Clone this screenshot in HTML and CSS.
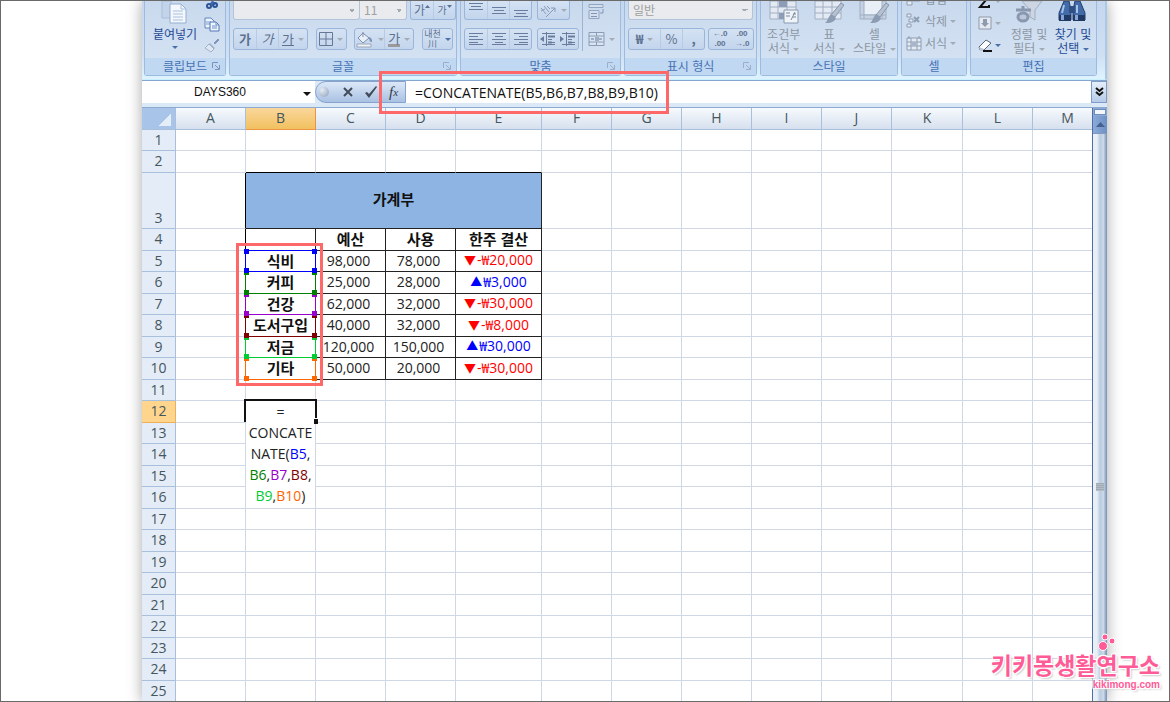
FILE: index.html
```html
<!DOCTYPE html>
<html lang="ko">
<head>
    <meta charset="UTF-8">
    <meta name="viewport" content="width=device-width, initial-scale=1.0">
    <title>가계부</title>
    <link rel="stylesheet" href="styles.css">
</head>
<body>
<div class="frame">
<main class="app">
    <div class="ribbon">
        <section class="group clipboard">
            <div class="group-body">
                <button class="big active">
                    <svg width="30" height="23" viewBox="0 0 30 23"><path d="M2 0v17h9V0z" fill="#c3d4ea" stroke="#a9bddb"/><path d="M10 3h11l5 5v14H10z" fill="#f4f8fd" stroke="#93add2"/><path d="M21 3v5h5M13 10h10M13 13h10M13 16h10M13 19h10" fill="none" stroke="#a9c0df"/></svg>
                    <span>붙여넣기</span>
                    <i class="arrow"></i>
                </button>
                <div class="stack">
                    <button aria-label="잘라내기"><svg width="16" height="9" viewBox="0 0 16 9"><path d="M8 0l3 4M9 0L6 4" stroke="#3e6cb5" stroke-width="2"/><ellipse cx="5" cy="5" rx="2" ry="2" fill="none" stroke="#2d5296" stroke-width="2"/><ellipse cx="11" cy="4" rx="2" ry="2" fill="none" stroke="#2d5296" stroke-width="2"/></svg></button>
                    <button aria-label="복사"><svg width="16" height="15" viewBox="0 0 16 15"><path d="M1 1h6l3 3v7H1z" fill="#edf4fd" stroke="#6384bd"/><path d="M2 5h5M2 7h5" stroke="#789bd0"/><path d="M6 5h6l3 3v6H6z" fill="#edf4fd" stroke="#5277b5"/><path d="M12 5v3h3M8 9h5M8 11h5" fill="none" stroke="#6f93ca"/></svg></button>
                    <button aria-label="서식 복사"><svg width="16" height="15" viewBox="0 0 16 15"><path d="M10 5l4-4 1 1-4 4z" fill="#8299bd" stroke="#8299bd"/><path d="M6 5l5 5-2 2-5-5z" fill="#a3b4cd"/><path d="M5 6l5 5-3 3-6-4z" fill="#dfe7f2" stroke="#a1b1ca"/></svg></button>
                </div>
            </div>
            <h2>클립보드<svg class="launcher" width="8" height="8" viewBox="0 0 8 8"><path d="M.5 6V.5H6M3 3l4 4M7.500 3v4.500H3" fill="none" stroke="#7994bd"/></svg></h2>
        </section>

        <section class="group font">
            <div class="group-body rows">
                <div class="row cut">
                    <div class="pair">
                        <select class="font-name" aria-label="글꼴"><option></option></select>
                        <select class="font-size" aria-label="글꼴 크기"><option>11</option></select>
                    </div>
                    <div class="box resize">
                        <button aria-label="글꼴 크게"><span>가</span><svg width="5" height="12" viewBox="0 0 5 12"><path d="M0 4l2.500-3L5 4z" fill="#5d7190"/></svg></button>
                        <button aria-label="글꼴 작게"><small>가</small><svg width="5" height="12" viewBox="0 0 5 12"><path d="M0 1l2.500 3L5 1z" fill="#5d7190"/></svg></button>
                    </div>
                </div>
                <div class="row">
                    <div class="box">
                        <button><b>가</b></button>
                        <button><em>가</em></button>
                        <button class="wide"><u>가</u><i class="arrow dim"></i></button>
                    </div>
                    <div class="box">
                        <button class="wide" aria-label="테두리"><svg width="14" height="14" viewBox="0 0 14 14"><path d="M.5 .5h13v13H.5zM7 1v12M1 7h12" fill="none" stroke="#647896"/></svg><i class="arrow dim"></i></button>
                    </div>
                    <div class="box">
                        <button class="wide" aria-label="채우기 색"><svg width="18" height="17" viewBox="0 0 18 17"><path d="M7 2l6 5-6 5-5-5z" fill="#e9eff8" stroke="#7c8fab"/><path d="M7 6V1" stroke="#7c8fab"/><path d="M13 6c3 1 3 3 3 5-2 0-3-1-3-5z" fill="#7e93b4"/><path d="M1 13h14v3H1z" fill="#eef1f5" stroke="#9aa7b8"/></svg><i class="arrow dim"></i></button>
                        <button class="wide font-color"><span>가</span><i class="arrow dim"></i></button>
                    </div>
                    <div class="box">
                        <button class="wide ruby"><span>내천<br>川</span><i class="arrow"></i></button>
                    </div>
                </div>
            </div>
            <h2>글꼴<svg class="launcher" width="8" height="8" viewBox="0 0 8 8"><path d="M.5 6V.5H6M3 3l4 4M7.500 3v4.500H3" fill="none" stroke="#9aaecb"/></svg></h2>
        </section>

        <section class="group align">
            <div class="group-body">
                <div class="rows">
                    <div class="row cut">
                        <div class="box">
                            <button aria-label="위쪽 맞춤"><svg width="16" height="16" viewBox="0 0 16 16"><path d="M1 1.500h14M3 4.500h10M1 7.500h14" stroke="#687d9e"/></svg></button>
                            <button aria-label="가운데 맞춤"><svg width="16" height="16" viewBox="0 0 16 16"><path d="M1 5.500h14M3 8.500h10M1 11.500h14" stroke="#687d9e"/></svg></button>
                            <button aria-label="아래쪽 맞춤"><svg width="16" height="16" viewBox="0 0 16 16"><path d="M1 8.500h14M3 11.500h10M1 14.500h14" stroke="#687d9e"/></svg></button>
                        </div>
                        <div class="box">
                            <button class="wide" aria-label="방향"><svg width="17" height="16" viewBox="0 0 17 16"><path d="M1 6l5 6M4 4l5 6M1 9l4-2M7 4l3 3M6 15l9-9M11 6h4v4" fill="none" stroke="#8c9bb4"/></svg><i class="arrow dim"></i></button>
                        </div>
                    </div>
                    <div class="row">
                        <div class="box">
                            <button aria-label="왼쪽 맞춤"><svg width="16" height="16" viewBox="0 0 16 16"><path d="M1 2.500h14M1 5.500h9M1 8.500h14M1 11.500h9M1 13.500h14" stroke="#687d9e"/></svg></button>
                            <button aria-label="중앙 맞춤"><svg width="16" height="16" viewBox="0 0 16 16"><path d="M1 2.500h14M4 5.500h8M1 8.500h14M4 11.500h8M1 13.500h14" stroke="#687d9e"/></svg></button>
                            <button aria-label="오른쪽 맞춤"><svg width="16" height="16" viewBox="0 0 16 16"><path d="M1 2.500h14M6 5.500h9M1 8.500h14M6 11.500h9M1 13.500h14" stroke="#687d9e"/></svg></button>
                        </div>
                        <div class="box plain">
                            <button class="slim" aria-label="내어쓰기"><svg width="16" height="16" viewBox="0 0 16 16"><path d="M2 2.500h13M8 5.500h7M8 8.500h4M8 11.500h7M2 13.500h13M6.500 1v14" stroke="#687d9e"/><path d="M8 5.500h7M8 11.500h4" stroke="#687d9e" stroke-width="2"/><path d="M4 5L0 8l4 3z" fill="#687d9e"/></svg></button>
                            <button class="slim" aria-label="들여쓰기"><svg width="16" height="16" viewBox="0 0 16 16"><path d="M2 2.500h13M8 5.500h7M8 8.500h4M8 11.500h7M2 13.500h13M6.500 1v14" stroke="#687d9e"/><path d="M8 5.500h7M8 11.500h4" stroke="#687d9e" stroke-width="2"/><path d="M0 5l4 3-4 3z" fill="#687d9e"/></svg></button>
                        </div>
                    </div>
                </div>
                <div class="rows divided">
                    <button aria-label="텍스트 줄 바꿈"><svg width="17" height="18" viewBox="0 0 17 18"><path d="M1 2.500h14v3H1zM1 8.500h10v8H1z" fill="#d3dfee" stroke="#93a4be"/><path d="M3 11.500h6M3 14.500h6M12 11h3V7" fill="none" stroke="#8194b3"/></svg></button>
                    <button class="wide" aria-label="병합하고 가운데 맞춤"><svg width="17" height="16" viewBox="0 0 17 16"><path d="M1 1.500h15v13H1zM1 5h15M1 11h15M8.500 1v4M8.500 11v4" fill="#d9e4f2" stroke="#8b9cb6"/><path d="M3 8h3M11 8h3M8 6v4M10 6v4" stroke="#667998"/></svg><i class="arrow dim"></i></button>
                </div>
            </div>
            <h2>맞춤<svg class="launcher" width="8" height="8" viewBox="0 0 8 8"><path d="M.5 6V.5H6M3 3l4 4M7.500 3v4.500H3" fill="none" stroke="#9aaecb"/></svg></h2>
        </section>

        <section class="group number">
            <div class="group-body rows">
                <div class="row cut"><select class="format" aria-label="표시 형식"><option>일반</option></select></div>
                <div class="row">
                    <div class="box">
                        <button class="wide"><b>₩</b><i class="arrow dim"></i></button>
                        <button>%</button>
                        <button><b>,</b></button>
                    </div>
                    <div class="box plain decimals">
                        <button>←.0<br>.00</button>
                        <button>.00<br>→.0</button>
                    </div>
                </div>
            </div>
            <h2>표시 형식<svg class="launcher" width="8" height="8" viewBox="0 0 8 8"><path d="M.5 6V.5H6M3 3l4 4M7.500 3v4.500H3" fill="none" stroke="#9aaecb"/></svg></h2>
        </section>

        <section class="group style">
            <div class="group-body">
                <button class="big">
                    <svg width="30" height="23" viewBox="0 0 30 23"><path d="M1 0h26v18H1z" fill="#e3eaf4" stroke="#a0aec2"/><path d="M1 6h26M1 12h26M9 0v18M18 0v18" stroke="#a0aec2"/><path d="M10 0h8v6h-8zM10 12h5v6h-5z" fill="#8d9db5"/><path d="M15 9h14v13H15z" fill="#f0f4f9" stroke="#8999b0"/><path d="M17 12h4M17 15h4M22 19l4-8M24 13h3M24 16h3" stroke="#78899f"/></svg>
                    <span>조건부<br>서식 <i class="arrow dim"></i></span>
                </button>
                <button class="big">
                    <svg width="30" height="23" viewBox="0 0 30 23"><path d="M1 0h26v18H1z" fill="#e3eaf4" stroke="#a0aec2"/><path d="M1 6h26M1 12h26M9 0v18M18 0v18" stroke="#a0aec2"/><path d="M27 2l3 2-9 12-4-2z" fill="#b5c0d0" stroke="#8796ac"/><path d="M17 13l5 4c-2 5-7 5-11 5 3-2 3-6 6-9z" fill="#8c9cb3"/></svg>
                    <span>표<br>서식 <i class="arrow dim"></i></span>
                </button>
                <button class="big">
                    <svg width="30" height="23" viewBox="0 0 30 23"><path d="M1 0h26v18H1z" fill="#c6d2e3" stroke="#a0aec2"/><path d="M5 0h18v13H5z" fill="#e9eff7"/><path d="M1 14h26M5 0v18M23 0v18" stroke="#a0aec2"/><path d="M27 2l3 2-9 12-4-2z" fill="#b5c0d0" stroke="#8796ac"/><path d="M17 13l5 4c-2 5-7 5-11 5 3-2 3-6 6-9z" fill="#8c9cb3"/></svg>
                    <span>셀<br>스타일 <i class="arrow dim"></i></span>
                </button>
            </div>
            <h2>스타일</h2>
        </section>

        <section class="group cells">
            <div class="group-body list">
                <button><svg width="16" height="16" viewBox="0 0 16 16"><path d="M1 2h5v4H1zM1 10h5v4H1zM7 7h7v3H7z" fill="#e5ebf4" stroke="#8e9db3"/></svg>삽입<i class="arrow dim"></i></button>
                <button><svg width="16" height="16" viewBox="0 0 16 16"><path d="M1 1h4v3H1zM1 11h4v3H1zM3 6h4v3H3z" fill="#e5ebf4" stroke="#8e9db3"/><path d="M8 4l5 5M13 4l-5 5" stroke="#8e9db3" stroke-width="2"/></svg>삭제<i class="arrow dim"></i></button>
                <button><svg width="16" height="16" viewBox="0 0 16 16"><path d="M1 3h14v12H1zM1 7h14M1 11h14M5 3v12M11 3v12M3 1v3M13 1v3" fill="#e5ebf4" stroke="#8e9db3"/><path d="M5 7h6v4H5z" fill="#a9b6ca"/></svg>서식<i class="arrow dim"></i></button>
            </div>
            <h2>셀</h2>
        </section>

        <section class="group edit">
            <div class="group-body">
                <div class="stack">
                    <button aria-label="합계"><svg width="16" height="16" viewBox="0 0 16 16"><path d="M12 2V1H4l5 6-6 7h9v-2" fill="none" stroke="#111" stroke-width="2"/></svg><i class="arrow dim"></i></button>
                    <button aria-label="채우기"><svg width="16" height="16" viewBox="0 0 16 16"><path d="M2 2h12v12H2z" fill="#e5eaf1" stroke="#8d9aab"/><path d="M6 4h4v4h2l-4 4-4-4h2z" fill="#8d9bb0"/></svg><i class="arrow dim"></i></button>
                    <button aria-label="지우기"><svg width="16" height="16" viewBox="0 0 16 16"><path d="M2 10l7-7 5 3-7 7H3z" fill="#fff" stroke="#56657b"/><path d="M2 10l5 2v2H3z" fill="#bbc6d7"/><path d="M6 14h9" stroke="#111" stroke-width="2"/></svg><i class="arrow"></i></button>
                </div>
                <button class="big">
                    <svg width="30" height="23" viewBox="0 0 30 23"><path d="M8 0h20l-7 9v10l-5-3V9z" fill="#ccd5e2" stroke="#a3afc0"/><path d="M2 9h15M9 5v3" stroke="#8998ae" stroke-width="3"/><ellipse cx="9" cy="16" rx="5" ry="4" fill="#bcc8d9" stroke="#8998ae" stroke-width="3"/></svg>
                    <span>정렬 및<br>필터 <i class="arrow dim"></i></span>
                </button>
                <button class="big active">
                    <svg width="30" height="23" viewBox="0 0 30 23"><path d="M6 0h5l2 9v10H1v-7zM17 0h5l5 12v7H15V9z" fill="#416ba9" stroke="#243f70"/><path d="M11 5h6v7h-6z" fill="#304f82"/><path d="M6 4l-2 8M19 4v8" stroke="#a7c3e8" stroke-width="2"/><path d="M1 14h12v6H1zM15 14h12v6H15z" fill="#203965"/><path d="M3 14h3v5H3zM17 14h3v5h-3z" fill="#86a6d4"/></svg>
                    <span>찾기 및<br>선택 <i class="arrow"></i></span>
                </button>
            </div>
            <h2>편집</h2>
        </section>
    </div>

    <div class="formula-bar">
        <input class="name-box" aria-label="이름 상자" value="DAYS360">
        <button class="name-drop" aria-label="이름 목록"><i class="arrow black"></i></button>
        <div class="formula-tools">
            <span class="knob"></span>
            <button aria-label="취소"><svg width="12" height="12" viewBox="0 0 12 12"><path d="M2 2l8 8M10 2l-8 8" stroke="#404a59" stroke-width="2"/></svg></button>
            <button aria-label="입력"><svg width="14" height="12" viewBox="0 0 14 12"><path d="M1 7l2-1 2 2 7-8 1 1-8 11z" fill="#404a59"/></svg></button>
            <button class="fx" aria-label="함수 삽입">f<sub>x</sub></button>
        </div>
        <input class="formula" aria-label="수식 입력줄" value="=CONCATENATE(B5,B6,B7,B8,B9,B10)">
        <button class="expand" aria-label="수식 입력줄 확장"><svg width="9" height="10" viewBox="0 0 9 10"><path d="M1 1l3.500 3L8 1M1 5l3.500 3L8 5" fill="none" stroke="#111" stroke-width="2"/></svg></button>
        <div class="mark mark-formula"></div>
    </div>

    <div class="workspace">
        <div class="sheet">
            <table>
                <colgroup><col class="c-head"><col><col><col><col><col class="c-e"><col><col><col><col><col><col class="c-k"><col><col></colgroup>
                <thead>
                    <tr><th class="corner"><th>A<th class="on">B<th>C<th>D<th>E<th>F<th>G<th>H<th>I<th>J<th>K<th>L<th>M</tr>
                </thead>
                <tbody>
                    <tr><th>1<td><td><td><td><td><td><td><td><td><td><td><td><td></tr>
                    <tr><th>2<td><td class="above"><td class="above"><td class="above"><td class="above"><td><td><td><td><td><td><td><td></tr>
                    <tr class="tall"><th>3<td class="before"><td colspan="4" class="cell title">가계부<td><td><td><td><td><td><td><td></tr>
                    <tr><th>4<td class="before"><td class="cell"><td class="cell name">예산<td class="cell name">사용<td class="cell name">한주 결산<td><td><td><td><td><td><td><td></tr>
                    <tr><th>5<td class="before"><td class="cell name">식비<span class="ref blue"></span><td class="cell num">98,000<td class="cell num">78,000<td class="cell down"><i>▼</i>-₩20,000<td><td><td><td><td><td><td><td></tr>
                    <tr><th>6<td class="before"><td class="cell name">커피<span class="ref green"></span><td class="cell num">25,000<td class="cell num">28,000<td class="cell up"><i>▲</i>₩3,000<td><td><td><td><td><td><td><td></tr>
                    <tr><th>7<td class="before"><td class="cell name">건강<span class="ref purple"></span><td class="cell num">62,000<td class="cell num">32,000<td class="cell down"><i>▼</i>-₩30,000<td><td><td><td><td><td><td><td></tr>
                    <tr><th>8<td class="before"><td class="cell name">도서구입<span class="ref maroon"></span><td class="cell num">40,000<td class="cell num">32,000<td class="cell down"><i>▼</i>-₩8,000<td><td><td><td><td><td><td><td></tr>
                    <tr><th>9<td class="before"><td class="cell name">저금<span class="ref lime"></span><td class="cell num">120,000<td class="cell num">150,000<td class="cell up"><i>▲</i>₩30,000<td><td><td><td><td><td><td><td></tr>
                    <tr><th>10<td class="before"><td class="cell name">기타<span class="ref orange"></span><td class="cell num">50,000<td class="cell num">20,000<td class="cell down"><i>▼</i>-₩30,000<td><td><td><td><td><td><td><td></tr>
                    <tr><th>11<td><td><td><td><td><td><td><td><td><td><td><td><td></tr>
                    <tr><th class="on">12<td><td class="editing"><div class="editor">=<br>CONCATE<br>NATE(<span class="blue">B5</span>,<br><span class="green">B6</span>,<span class="purple">B7</span>,<span class="maroon">B8</span>,<br><span class="lime">B9</span>,<span class="orange">B10</span>)</div><span class="active-cell"></span><td><td><td><td><td><td><td><td><td><td><td></tr>
                    <tr><th>13<td><td><td><td><td><td><td><td><td><td><td><td><td></tr>
                    <tr><th>14<td><td><td><td><td><td><td><td><td><td><td><td><td></tr>
                    <tr><th>15<td><td><td><td><td><td><td><td><td><td><td><td><td></tr>
                    <tr><th>16<td><td><td><td><td><td><td><td><td><td><td><td><td></tr>
                    <tr><th>17<td><td><td><td><td><td><td><td><td><td><td><td><td></tr>
                    <tr><th>18<td><td><td><td><td><td><td><td><td><td><td><td><td></tr>
                    <tr><th>19<td><td><td><td><td><td><td><td><td><td><td><td><td></tr>
                    <tr><th>20<td><td><td><td><td><td><td><td><td><td><td><td><td></tr>
                    <tr><th>21<td><td><td><td><td><td><td><td><td><td><td><td><td></tr>
                    <tr><th>22<td><td><td><td><td><td><td><td><td><td><td><td><td></tr>
                    <tr><th>23<td><td><td><td><td><td><td><td><td><td><td><td><td></tr>
                    <tr><th>24<td><td><td><td><td><td><td><td><td><td><td><td><td></tr>
                    <tr><th>25<td><td><td><td><td><td><td><td><td><td><td><td><td></tr>
                </tbody>
            </table>
            <div class="mark mark-names"></div>
        </div>
        <div class="scrollbar">
            <div class="split"></div>
            <button class="scroll-up" aria-label="위로"><svg width="9" height="5" viewBox="0 0 9 5"><path d="M0 5l4.500-5L9 5z" fill="#46618f"/></svg></button>
            <div class="thumb"><div class="grip"></div></div>
        </div>
    </div>
</main>
<div class="watermark">
    <svg width="20" height="19" viewBox="0 0 20 19"><g fill="#ff5c97" stroke="#fff"><circle cx="6" cy="13" r="4.500"/><circle cx="8" cy="4" r="3"/><circle cx="15" cy="8" r="3"/></g></svg>
    <strong>키키몽생활연구소</strong>
    <span>kikimong.com</span>
</div>
</div>
</body>
</html>
```
FILE: styles.css
```css
* { box-sizing: border-box; }
body { margin: 0; background: #fff; color: #222; font-family: "Open Sans", "Noto Sans CJK KR", sans-serif; font-size: 14px; }
button { margin: 0; padding: 0; border: 0; background: none; color: inherit; font: inherit; }
input, select { margin: 0; border-radius: 0; font: inherit; }
svg { display: block; flex: none; }

.frame { position: relative; height: 100vh; padding: 0 62px 0 141px; border: 1px solid #6a6a6a; overflow: hidden; }
.app { background: #fff; box-shadow: 0 0 14px rgba(0, 0, 0, 0.35); min-height: 100%; }

/* ribbon */
.ribbon { display: flex; align-items: flex-end; gap: 3px; height: 79px; padding: 0 2px 3px; overflow: hidden; background: linear-gradient(#c5d7ee, #cfe0f3 70%, #dff3ff); border-right: 2px solid #a9c9e8; border-bottom: 1px solid #c9f0ff; font-family: "Noto Sans CJK KR", sans-serif; font-size: 12px; color: #5d7190; }
.group { flex: none; height: 75px; border: 1px solid #9dbbe0; border-top: 0; border-radius: 0 0 3px 3px; background: linear-gradient(#c9d9ed, #d6e4f4); }
.group h2 { position: relative; margin: 0; height: 17px; line-height: 15px; background: #c0d8f1; color: #4672b4; font-size: 12px; font-weight: 400; text-align: center; }
.launcher { position: absolute; right: 5px; top: 4px; }
.group-body { display: flex; height: 57px; padding: 0 3px; }
.clipboard { width: 82px; }
.clipboard .group-body { padding: 0 3px 0 1px; }
.font { width: 228px; }
.align { width: 161px; }
.number { width: 133px; }
.style { width: 138px; }
.cells { width: 66px; }
.edit { width: 127px; }

.arrow { display: inline-block; flex: none; border: 3px solid transparent; border-top-color: #4970a8; border-bottom: 0; vertical-align: middle; }
.arrow.dim { border-top-color: #a3abb5; }
.arrow.black { border-width: 4px 4px 0; border-top-color: #111; }

.big { display: flex; flex-direction: column; align-items: center; flex: 1; line-height: 14px; color: #8c96a3; white-space: nowrap; }
.big.active { color: #1e4a94; }
.big > svg { margin-bottom: 3px; }
.clipboard .big { flex: 0 0 58px; }
.clipboard .big .arrow { margin-top: 5px; }
.stack { display: flex; flex-direction: column; justify-content: space-between; padding-bottom: 5px; }
.stack button { display: flex; align-items: center; gap: 2px; }
.edit .stack { width: 30px; justify-content: flex-end; gap: 6px; }
.edit .big { flex: 0 0 44px; }
.edit .group-body { padding: 0 1px 0 6px; }

.rows { display: flex; flex-direction: column; gap: 8px; }
.row { display: flex; gap: 3px; height: 22px; }
.row.cut { height: 19px; }
.row.cut .box, .row.cut select { border-top: 0; border-radius: 0 0 3px 3px; }
.box { display: flex; border: 1px solid #9ab5da; border-radius: 3px; background: linear-gradient(#d4e2f3, #c3d5ed); }
.box button { display: flex; align-items: center; justify-content: center; width: 22px; font-size: 13px; line-height: 14px; }
.box button + button { border-left: 1px solid #b7cbe5; }
.plain button + button { border-left: 0; }
.box button.wide { width: 31px; gap: 4px; }
.box button.slim { width: 20px; }
.resize button { font-size: 12px; }
.resize small { font-size: 10px; }
.font .box button.wide { width: 29px; }
.font .font-color span { border-bottom: 3px solid #9a9a9a; line-height: 13px; }
.box .ruby span { font-size: 9px; line-height: 10px; }
.font .row { justify-content: space-between; width: 220px; }
.pair { display: flex; }
select { appearance: none; padding: 0 4px; border: 1px solid #b3c4da; color: #a0a0a0; background: linear-gradient(45deg, transparent 50%, #a3abb5 50%) right 7px top 8px / 3px 3px no-repeat, linear-gradient(-45deg, transparent 50%, #a3abb5 50%) right 4px top 8px / 3px 3px no-repeat, #e9ebee; font-size: 12px; line-height: 16px; }
.font-name { width: 127px; }
.font-size { width: 47px; border-left: 0; }
.format { width: 125px; }
.align .row { gap: 5px; }
.divided { margin-left: 3px; padding-left: 5px; height: 50px; border-left: 1px solid #9cb3d3; }
.divided button { display: flex; align-items: center; gap: 4px; height: 20px; }
.decimals button { font-family: "Liberation Sans", sans-serif; font-size: 8px; font-weight: 700; line-height: 10px; }
.style .group-body { padding: 0; }
.list { flex-direction: column; justify-content: flex-end; gap: 4px; padding: 0 4px 6px; color: #8c96a3; }
.list button { display: flex; align-items: center; gap: 3px; line-height: 18px; }

/* formula bar */
.formula-bar { position: relative; display: flex; height: 28px; padding: 1px 0 4px; border-bottom: 1px solid #8ca9ce; background: linear-gradient(#86a5cf 0 1px, #dbe8f7 1px); }
.formula-bar input { border: 0; outline: 0; background: #fff; }
.name-box { width: 156px; padding: 0; font-family: "Liberation Sans", sans-serif; font-size: 12px; text-align: center; color: #111; }
.name-drop { width: 17px; background: #fff; }
.formula-tools { display: flex; align-items: center; width: 91px; border: 1px solid #86a3ce; border-radius: 12px 0 0 12px; background: linear-gradient(#dce8f7, #a9c1e3); }
.formula-tools button { display: flex; justify-content: center; width: 23px; }
.knob { width: 10px; height: 10px; margin: 0 7px 0 3px; border-radius: 50%; background: radial-gradient(circle at 30% 30%, #e6edf6, #8e9fb8); }
.formula-tools .fx { font-family: "Liberation Serif", serif; font-style: italic; font-size: 15px; line-height: 18px; color: #333b4a; }
.fx sub { font-size: 11px; line-height: 18px; align-self: flex-end; }
.formula-bar .formula { flex: 1; min-width: 0; padding: 0 9px; color: #111; }
.expand { display: flex; align-items: center; justify-content: center; width: 16px; border: 1px solid #7e9cc9; background: linear-gradient(#e5effb, #b6cbe8); }

.mark { position: absolute; border: 3px solid #ff6868; z-index: 10; }
.mark-formula { left: 237px; top: -9px; width: 290px; height: 43px; }
.mark-names { left: 94px; top: 135px; width: 87px; height: 143px; }

/* sheet */
.workspace { display: flex; }
.sheet { position: relative; flex: 1; min-width: 0; overflow: hidden; }
table { width: 961px; table-layout: fixed; border-collapse: separate; border-spacing: 0; }
col { width: 70px; }
.c-head { width: 34px; }
.c-k { width: 71px; }
.c-e { width: 86px; }
th, td { height: 21px; padding: 0 0 1px; line-height: 18px; border: 0 solid #d0d7e5; border-width: 0 1px 1px 0; text-align: center; white-space: nowrap; }
tr:nth-child(even) th, tr:nth-child(even) td { height: 22px; }
th { font-weight: 400; color: #44565e; background: #e4ecf7; border-color: #a9c0dc; }
thead th { height: 22px; background: linear-gradient(#f7fafd, #d6e0ee); }
thead th.on { background: linear-gradient(#f9d79b, #f2c05f); border-color: #ec9444; }
tbody th.on { background: #ffd58d; border-color: #ecb05a; }
thead .corner { background: linear-gradient(135deg, transparent 0 50%, #e5edf7 50%) 17px 6px / 12px 12px no-repeat #a9c4e9; }
tbody .tall th, tbody .tall td { height: 56px; }
tbody .tall th { vertical-align: bottom; }
td { position: relative; }
td.above { border-bottom-color: #000; }
td.before { border-right-color: #000; }
td.cell { border-color: #222; }
td.title { padding-bottom: 3px; background: #8db4e3; color: #111; font-size: 15px; font-weight: 700; }
.name { font-size: 15px; font-weight: 700; color: #111; }
td.num { padding-right: 4px; }
.down { color: #f00; }
.up { color: #00f; }
td i { margin-right: 1px; font-style: normal; font-size: 12px; }

.blue { color: #00f; z-index: 6; }
.green { color: #008000; z-index: 5; }
.purple { color: #9900cc; z-index: 4; }
.maroon { color: #800000; z-index: 3; }
.lime { color: #00cc33; z-index: 2; }
.orange { color: #ff6600; z-index: 1; }
.ref { position: absolute; inset: -2px; background: linear-gradient(currentColor, currentColor) 0 0 / 5px 5px no-repeat, linear-gradient(currentColor, currentColor) 100% 0 / 5px 5px no-repeat, linear-gradient(currentColor, currentColor) 0 100% / 5px 5px no-repeat, linear-gradient(currentColor, currentColor) 100% 100% / 5px 5px no-repeat; }
.ref::before { content: ""; position: absolute; inset: 1px; border: 1px solid; }

.editor { position: absolute; left: 0; top: 0; z-index: 2; width: 69px; height: 107px; background: #fff; line-height: 21px; }
.active-cell { position: absolute; inset: -2px -2px 0 -2px; z-index: 3; border: 2px solid #111; border-bottom: 0; }
.active-cell::after { content: ""; position: absolute; right: -3px; bottom: -2px; width: 4px; height: 5px; background: #111; border-top: 1px solid #fff; }

/* scroll bar */
.scrollbar { display: flex; flex-direction: column; flex: 0 0 15px; border-left: 1px solid #4f6ea5; background: #8aa9d6; }
.split { height: 6px; margin: 1px; border: 1px solid #6d8dbd; background: #f2f7fd; }
.scroll-up { display: flex; align-items: center; justify-content: center; height: 17px; background: linear-gradient(90deg, #8aabd8, #6e91c6); }
.thumb { flex: 1; padding-top: 349px; border: 1px solid #8299bd; border-left: 0; background: linear-gradient(90deg, #e9eff6 0 30%, #b8cbe1 55%, #ccdae9 80%, #8ea2c0); }
.grip { width: 8px; height: 8px; margin-left: 3px; background: repeating-linear-gradient(#9faab5 0 1px, #b4bdc6 1px 2px); }

.watermark { position: absolute; right: 9px; bottom: 9px; z-index: 20; display: flex; flex-direction: column; align-items: flex-end; color: #ff5c97; text-shadow: 0 0 2px #fff, 1px 1px 0 #fff, -1px -1px 0 #fff, 1px -1px 0 #fff, -1px 1px 0 #fff, 2px 2px 2px #ccc; }
.watermark svg { margin: 0 43px -2px 0; }
.watermark strong { font-family: "Noto Sans CJK KR", sans-serif; font-weight: 700; font-size: 23px; line-height: 28px; }
.watermark span { font-family: "Liberation Sans", sans-serif; font-weight: 700; font-size: 10px; line-height: 14px; }
```
